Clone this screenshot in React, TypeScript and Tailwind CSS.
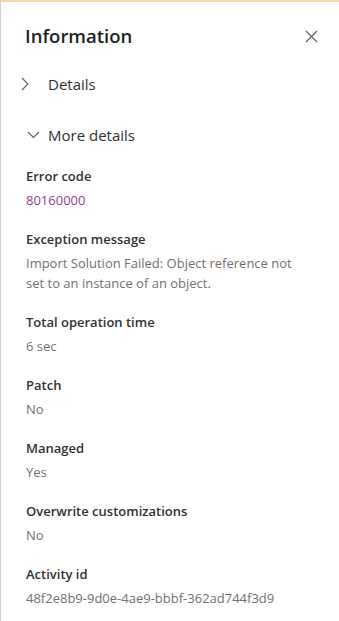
import React from 'react';

const fields = [
  { label: "Error code", value: "80160000", accent: true },
  { label: "Exception message", value: "Import Solution Failed: Object reference not set to an instance of an object." },
  { label: "Total operation time", value: "6 sec" },
  { label: "Patch", value: "No" },
  { label: "Managed", value: "Yes" },
  { label: "Overwrite customizations", value: "No" },
  { label: "Activity id", value: "48f2e8b9-9d0e-4ae9-bbbf-362ad744f3d9" },
];

const App = () => {
  return (
    <div className="w-[339px] h-[621px] overflow-hidden bg-white border-t-2 border-t-[#f9d5ab] border-l border-l-[#cfcfcf] font-['Open_Sans',sans-serif] text-[#323130]">
      {/* Header */}
      <div className="flex items-center justify-between pl-[24px] pr-[21px] pt-[20px] h-[48px]">
        <h1 className="text-[18.5px] leading-[28px] font-semibold text-[#201f1e]">Information</h1>
        <button className="w-[14px] h-[14px] flex items-center justify-center">
          <svg width="13" height="13" viewBox="0 0 13 13" fill="none" stroke="#605e5c" strokeWidth="1.1">
            <path d="M1 1 L12 12 M12 1 L1 12" />
          </svg>
        </button>
      </div>

      {/* Details */}
      <div className="flex items-center h-[22px] mt-[23px] pl-[19px]">
        <svg width="10" height="14" viewBox="0 0 10 14" fill="none" stroke="#605e5c" strokeWidth="1.1">
          <path d="M2 1 L8 7 L2 13" />
        </svg>
        <span className="ml-[18px] text-[15px] leading-[22px] text-[#323130]">Details</span>
      </div>

      {/* More details */}
      <div className="flex items-center h-[22px] mt-[29px] pl-[26px]">
        <svg width="13" height="8" viewBox="0 0 13 8" fill="none" stroke="#605e5c" strokeWidth="1.1">
          <path d="M1 1 L6.5 6.5 L12 1" />
        </svg>
        <span className="ml-[8px] text-[15px] leading-[22px] text-[#323130]">More details</span>
      </div>

      {/* Fields */}
      <div className="mt-[20px] pl-[25px] w-[310px] flex flex-col gap-[19px]">
        {fields.map((f, i) => (
          <div key={i} className="flex flex-col gap-[4px]">
            <div className="text-[13px] leading-[20px] font-semibold text-[#323130]">{f.label}</div>
            <div className={`text-[13px] leading-[20px] ${f.accent ? 'text-[#8e3f96]' : 'text-[#737170]'}`}>
              {f.value}
            </div>
          </div>
        ))}
      </div>
    </div>
  );
};

export default App;
